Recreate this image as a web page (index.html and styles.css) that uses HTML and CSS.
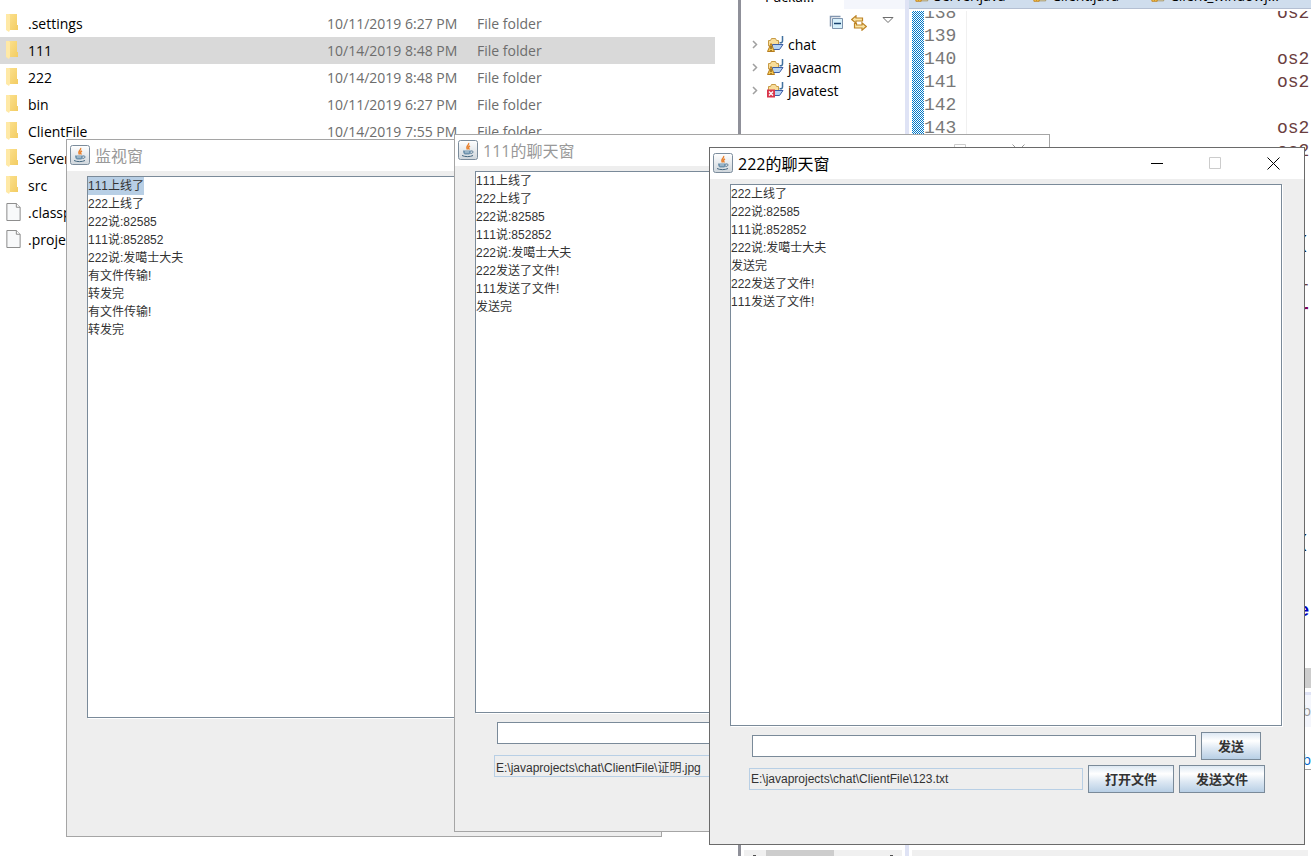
FILE: index.html
```
<!DOCTYPE html>
<html lang="zh-CN">
<head>
    <meta charset="UTF-8">
    <meta name="viewport" content="width=device-width, initial-scale=1.0">
    <title>聊天窗</title>
    <link rel="stylesheet" href="styles.css">
</head>
<body>
    <!-- shared icons -->
    <svg class="sprite" aria-hidden="true">
        <defs>
            <linearGradient id="folder-front" x1="0" y1="0" x2="1" y2="1">
                <stop offset="0" stop-color="#fbe08c"/>
                <stop offset="1" stop-color="#f3cc62"/>
            </linearGradient>
            <linearGradient id="cup-back" x1="0" y1="0" x2="0" y2="1">
                <stop offset="0" stop-color="#ffffff"/>
                <stop offset="1" stop-color="#cfd6dc"/>
            </linearGradient>
            <symbol id="folder" viewBox="0 0 12 18">
                <path d="M3 0h8v11h1v5H3z" fill="url(#folder-front)"/>
                <path d="M0 0h3l1 1v15l-1 2-3-2z" fill="#ffe9a6"/>
            </symbol>
            <symbol id="file" viewBox="0 0 15 19">
                <path d="M.5.5h10l4 4v14H.5z" fill="#f8f9fa" stroke="#858585"/>
                <path d="M10.500.500v4h4" fill="#fff" stroke="#858585"/>
            </symbol>
            <symbol id="java" viewBox="0 0 20 20">
                <rect x=".5" y=".5" width="19" height="19" rx="2" fill="url(#cup-back)" stroke="#7b8c9c"/>
                <path d="M10.500 3c1.500 2-3.500 3-1 6.500M12 6c-2 1-2 2-.5 3.500" fill="none" stroke="#e9812d" stroke-width="1.400"/>
                <path d="M5 10.500h8c0 2-.5 3.500-2 4H7c-1.500-.5-2-2-2-4z" fill="#6f93ad"/>
                <path d="M13 11c3-.5 2.500 2.500-.5 2.500" fill="none" stroke="#50748f"/>
                <path d="M4 15.500c3 1.500 8 1.500 11 0" fill="none" stroke="#45677f"/>
                <path d="M7 12h4" stroke="#c4d6e2"/>
            </symbol>
            <symbol id="project" viewBox="0 0 17 17">
                <path d="M1.500 10V4.500h2l1-2h4l1 2h2V10z" fill="#f8dd9a" stroke="#c79a45"/>
                <path d="M15.500 0v5c0 1.500-1 2-3 1.500" fill="none" stroke="#41719f" stroke-width="1.500"/>
                <path d="M5.500 8.500h10.500l-3.500 5H5.500z" fill="#b5d3f4" stroke="#3d5ea5"/>
            </symbol>
            <symbol id="warning" viewBox="0 0 8 9">
                <path d="M4 .5 7.500 8.500h-7z" fill="#f5c752" stroke="#b47b1d"/>
                <path d="M4 3v3M4 7v1" stroke="#553400"/>
            </symbol>
            <symbol id="error" viewBox="0 0 8 8">
                <path d="M0 0h8v8H0z" fill="#d9364c"/>
                <path d="M2 2l4 4M6 2L2 6" stroke="#fff" stroke-width="1.400"/>
            </symbol>
            <symbol id="java-file" viewBox="0 0 16 16">
                <path d="M6.500.5h8v13h-8z" fill="#fffbe8" stroke="#9a8852"/>
                <path d="M1 7h6v7H1z" fill="#f5c752" stroke="#c07d12"/>
                <path d="M4 9v4" stroke="#774600"/>
            </symbol>
        </defs>
    </svg>

    <div class="desktop">
        <section class="explorer">
            <table class="files">
                <tbody>
                    <tr><td class="name"><svg class="folder"><use href="#folder"/></svg>.settings</td><td class="date">10/11/2019 6:27 PM</td><td>File folder</td></tr>
                    <tr class="active"><td class="name"><svg class="folder"><use href="#folder"/></svg>111</td><td class="date">10/14/2019 8:48 PM</td><td>File folder</td></tr>
                    <tr><td class="name"><svg class="folder"><use href="#folder"/></svg>222</td><td class="date">10/14/2019 8:48 PM</td><td>File folder</td></tr>
                    <tr><td class="name"><svg class="folder"><use href="#folder"/></svg>bin</td><td class="date">10/11/2019 6:27 PM</td><td>File folder</td></tr>
                    <tr><td class="name"><svg class="folder"><use href="#folder"/></svg>ClientFile</td><td class="date">10/14/2019 7:55 PM</td><td>File folder</td></tr>
                    <tr><td class="name"><svg class="folder"><use href="#folder"/></svg>Server</td><td></td><td></td></tr>
                    <tr><td class="name"><svg class="folder"><use href="#folder"/></svg>src</td><td></td><td></td></tr>
                    <tr><td class="name"><svg class="file"><use href="#file"/></svg>.classp</td><td></td><td></td></tr>
                    <tr><td class="name"><svg class="file"><use href="#file"/></svg>.projec</td><td></td><td></td></tr>
                </tbody>
            </table>
        </section>

        <section class="packages">
            <div class="view-tabs"><span class="view-tab">Packa...</span></div>
            <div class="toolbar">
                <button class="tool" aria-label="Collapse All">
                    <svg width="15" height="15" viewBox="0 0 15 15"><path d="M1.500 11.500v-10h10" fill="none" stroke="#8296b0" stroke-width="1.500"/><path d="M3.500 3.500h10v10h-10z" fill="#d7f0fb" stroke="#7d93ad"/><path d="M5 8.500h7" stroke="#17426f" stroke-width="1.500"/></svg>
                </button>
                <button class="tool" aria-label="Link with Editor">
                    <svg width="16" height="16" viewBox="0 0 16 16"><path d="M.7 4.500 5 .8v2.200h6.500v3H5v2.200zM15.300 11.500 11 7.800V10H5.500V8.500h-2V13H11v2.200z" fill="#fbe5a5" stroke="#bd8426" stroke-width="1.200"/></svg>
                </button>
                <button class="tool menu" aria-label="View Menu">
                    <svg width="12" height="7" viewBox="0 0 12 7"><path d="M1 .5h10l-5 5z" fill="#fff" stroke="#6d6d6d"/></svg>
                </button>
            </div>
            <ul class="tree">
                <li><svg class="arrow" viewBox="0 0 6 9"><path d="M1 1l3.500 3.500L1 8" fill="none" stroke="#a0a0a0" stroke-width="1.500"/></svg><span class="icon"><svg><use href="#project"/></svg><svg class="badge"><use href="#warning"/></svg></span>chat</li>
                <li><svg class="arrow" viewBox="0 0 6 9"><path d="M1 1l3.500 3.500L1 8" fill="none" stroke="#a0a0a0" stroke-width="1.500"/></svg><span class="icon"><svg><use href="#project"/></svg><svg class="badge"><use href="#warning"/></svg></span>javaacm</li>
                <li><svg class="arrow" viewBox="0 0 6 9"><path d="M1 1l3.500 3.500L1 8" fill="none" stroke="#a0a0a0" stroke-width="1.500"/></svg><span class="icon"><svg><use href="#project"/></svg><svg class="badge"><use href="#error"/></svg></span>javatest</li>
            </ul>
            <div class="scroll"><span class="tick"></span><span class="thumb"></span><span class="tick"></span></div>
        </section>

        <section class="editor">
            <div class="editor-tabs">
                <span class="editor-tab"><svg><use href="#java-file"/></svg>Server.java</span>
                <span class="editor-tab"><svg><use href="#java-file"/></svg>Client.java</span>
                <span class="editor-tab"><svg><use href="#java-file"/></svg>Client_windowj...</span>
            </div>
            <div class="source">
                <div class="ruler"></div>
<pre class="lines">138
139
140
141
142
143</pre>
<pre class="code"><span class="var">os2</span>

<span class="var">os2</span>
<span class="var">os2</span>

<span class="var">os2</span>
<span class="var">os2</span>



  (

  <span class="var">r</span>
  <span class="key">r</span>









  (


  <span class="field">e</span>
</pre>
            </div>
            <div class="source-scroll"></div>
            <div class="console">
                <div class="console-tab">b</div>
                <div class="console-path">\<a href="#">b</a></div>
            </div>
            <div class="scroll"></div>
        </section>

        <section class="window monitor">
            <header class="titlebar"><svg class="java"><use href="#java"/></svg><h1>监视窗</h1></header>
            <div class="pane">
                <textarea class="log" id="monitor-log" aria-label="监视窗" readonly>111上线了
222上线了
222说:82585
111说:852852
222说:发噶士大夫
有文件传输!
转发完
有文件传输!
转发完</textarea>
            </div>
        </section>

        <section class="window chat-111">
            <header class="titlebar">
                <svg class="java"><use href="#java"/></svg><h1>111的聊天窗</h1>
                <button class="control" aria-label="最小化"><svg viewBox="0 0 13 13"><path d="M0 6.500h12"/></svg></button>
                <button class="control" aria-label="最大化" disabled><svg viewBox="0 0 13 13"><path d="M.5.5h11v11H.5z"/></svg></button>
                <button class="control" aria-label="关闭"><svg viewBox="0 0 13 13"><path d="M.5.5l12 12M12.500.500l-12 12"/></svg></button>
            </header>
            <div class="pane">
                <textarea class="log" aria-label="111的聊天记录" readonly>111上线了
222上线了
222说:82585
111说:852852
222说:发噶士大夫
222发送了文件!
111发送了文件!
发送完</textarea>
                <form class="row message">
                    <input type="text" aria-label="消息">
                </form>
                <form class="row upload">
                    <input type="text" class="path" aria-label="文件" value="E:\javaprojects\chat\ClientFile\证明.jpg" readonly>
                </form>
            </div>
        </section>

        <section class="window chat-222">
            <header class="titlebar">
                <svg class="java"><use href="#java"/></svg><h1>222的聊天窗</h1>
                <button class="control" aria-label="最小化"><svg viewBox="0 0 13 13"><path d="M0 6.500h12"/></svg></button>
                <button class="control" aria-label="最大化" disabled><svg viewBox="0 0 13 13"><path d="M.5.5h11v11H.5z"/></svg></button>
                <button class="control" aria-label="关闭"><svg viewBox="0 0 13 13"><path d="M.5.5l12 12M12.500.500l-12 12"/></svg></button>
            </header>
            <div class="pane">
                <textarea class="log" aria-label="222的聊天记录" readonly>222上线了
222说:82585
111说:852852
222说:发噶士大夫
发送完
222发送了文件!
111发送了文件!</textarea>
                <form class="row message">
                    <input type="text" aria-label="消息">
                    <button type="button" class="btn">发送</button>
                </form>
                <form class="row upload">
                    <input type="text" class="path" aria-label="文件" value="E:\javaprojects\chat\ClientFile\123.txt" readonly>
                    <button type="button" class="btn">打开文件</button>
                    <button type="button" class="btn">发送文件</button>
                </form>
            </div>
        </section>
    </div>

    <script>
        // the first line of the monitor log is selected
        const log = document.getElementById("monitor-log");
        log.focus();
        log.setSelectionRange(0, log.value.indexOf("\n"));
    </script>
</body>
</html>
```

FILE: styles.css
```
* {
    box-sizing: border-box;
}

body {
    margin: 0;
    background-color: #fff;
    font-family: "Open Sans", "Noto Sans CJK SC", sans-serif;
    font-size: 14px;
    font-kerning: none;
    color: #000;
}

.sprite {
    position: absolute;
    width: 0;
    height: 0;
}

.desktop {
    display: flex;
    position: relative;
    height: 100vh;
    overflow: hidden;
}

/* file explorer */
.explorer {
    flex: 0 0 741px;
    border-right: 3px solid #8f9099;
    padding-top: 10px;
}

.files {
    width: 715px;
    border-collapse: collapse;
    table-layout: fixed;
}

.files td {
    height: 27px;
    padding: 0;
    color: #6d6d6d;
    white-space: nowrap;
}

.files .name {
    width: 327px;
    padding-left: 6px;
    color: #000;
}

.files .date {
    width: 150px;
}

.files .active {
    background-color: #d9d9d9;
}

.files svg {
    vertical-align: -3px;
    height: 18px;
}

.files .folder {
    width: 12px;
    margin-right: 10px;
}

.files .file {
    width: 15px;
    margin-right: 7px;
}

/* package explorer */
.packages {
    display: flex;
    flex-direction: column;
    flex: 0 0 168px;
    border-right: 4px solid #dfe3f5;
}

.view-tabs {
    display: flex;
    height: 9px;
    overflow: hidden;
    align-items: flex-end;
    background-color: #f4f6fc;
}

.view-tab {
    width: 103px;
    padding-left: 24px;
    line-height: 24px;
    background-color: #fff;
}

.toolbar {
    display: flex;
    justify-content: flex-end;
    gap: 7px;
    padding: 6px 11px 0 0;
    height: 24px;
    align-items: flex-start;
}

.tool {
    padding: 0;
    border: none;
    background: none;
    line-height: 0;
}

.tool.menu {
    margin: 2px 0 0 8px;
}

.tree {
    flex: 1;
    margin: 0;
    padding: 0 0 0 11px;
    list-style: none;
}

.tree li {
    display: flex;
    align-items: center;
    height: 23px;
}

.tree .arrow {
    width: 6px;
    height: 9px;
    margin-right: 9px;
}

.tree .icon {
    position: relative;
    width: 17px;
    height: 17px;
    margin-right: 4px;
}

.tree .icon svg {
    width: 17px;
    height: 17px;
}

.tree .icon .badge {
    position: absolute;
    left: 0;
    bottom: 1px;
    width: 8px;
    height: 9px;
}

.scroll {
    display: flex;
    justify-content: space-between;
    height: 6px;
    margin: 0 3px;
    background-color: #f0f0f0;
}

.thumb {
    width: 68px;
    margin-right: 47px;
    background-color: #cdcdcd;
}

.tick {
    width: 3px;
    height: 1px;
    margin: 5px 9px 0;
    background-color: #505050;
}

/* java editor */
.editor {
    display: flex;
    flex-direction: column;
    flex: 1;
    min-width: 0;
}

.editor-tabs {
    display: flex;
    align-items: flex-end;
    height: 9px;
    overflow: hidden;
    padding-left: 5px;
    background-color: #cfdded;
    border-bottom: 1px solid #b4bfd2;
}

.editor-tab {
    display: flex;
    align-items: center;
    flex: 0 0 118px;
    white-space: nowrap;
    line-height: 24px;
}

.editor-tab svg {
    width: 16px;
    height: 14px;
    margin-right: 4px;
}

.source {
    display: flex;
    flex: 1;
    min-height: 0;
    overflow: hidden;
    padding: 0 0 0 3px;
    margin-top: 2px;
}

.source pre {
    margin: -9px 0 0;
    font: 18px/23px "Liberation Mono", monospace;
}

.ruler {
    flex: 0 0 12px;
    background: repeating-conic-gradient(#0078c8 0% 25%, #fff 0% 50%) 0 0 / 2px 2px;
}

.source .lines {
    width: 43px;
    color: #787878;
    border-right: 1px solid #f0f0f0;
}

.source .code {
    padding-left: 310px;
}

.var {
    color: #6a3e3e;
}

.key {
    color: #7f0055;
    font-weight: bold;
}

.field {
    color: #0000c0;
    font-weight: bold;
}

.source-scroll {
    height: 20px;
    margin: 0 0 4px 3px;
    background-color: #cdcdcd;
}

.console {
    height: 158px;
    border-top: 3px solid #dfe3f5;
    text-align: right;
}

.console-tab {
    line-height: 32px;
    background-color: #f4f6fc;
    color: #999;
}

.console-path {
    margin-top: 24px;
    line-height: 18px;
    border-bottom: 1px solid #a0a0a0;
}

.console-path a {
    color: #0066cc;
    text-decoration: none;
}

/* swing windows */
.window {
    position: absolute;
    display: flex;
    flex-direction: column;
    width: 596px;
    height: 698px;
    border: 1px solid #a5a5a5;
    background-color: #eee;
    color: #999;
}

.monitor {
    left: 66px;
    top: 139px;
}

.chat-111 {
    left: 454px;
    top: 134px;
}

.chat-222 {
    left: 709px;
    top: 147px;
    border-color: #6a6a6a;
    color: #000;
}

.titlebar {
    display: flex;
    align-items: center;
    height: 31px;
    padding: 0 2px 2px 3px;
    background-color: #fff;
}

.titlebar h1 {
    flex: 1;
    margin: 0;
    font-size: 16px;
    font-weight: normal;
}

.java {
    width: 20px;
    height: 20px;
    margin-right: 5px;
}

.control {
    width: 58px;
    height: 29px;
    padding: 1px 0 0;
    border: none;
    background: none;
    color: inherit;
    line-height: 0;
}

.control svg {
    width: 13px;
    height: 13px;
    fill: none;
    stroke: currentColor;
}

.control:disabled {
    color: #ccc;
}

.pane {
    display: flex;
    flex-direction: column;
    flex: 1;
    gap: 5px;
    padding: 5px 0 51px;
}

.log {
    flex: 0 0 542px;
    margin: 0 22px 1px 20px;
    padding: 0;
    border: 1px solid #7a8a99;
    box-shadow: 1px 1px #fff;
    background-color: #fff;
    color: #333;
    font: 12px/18px "Liberation Sans", "Noto Sans CJK SC", sans-serif;
    font-kerning: none;
    resize: none;
    outline: none;
}

.log::selection {
    background-color: #b8cfe5;
    color: #333;
}

.row {
    display: flex;
    align-items: center;
    gap: 5px;
    height: 28px;
    margin: 0;
}

.message {
    padding: 0 43px 0 42px;
}

.upload {
    padding: 0 39px;
}

.row input {
    flex: 1;
    min-width: 0;
    height: 22px;
    padding: 0 1px;
    border: 1px solid #7a8a99;
    background-color: #fff;
    color: #333;
    font: 12px "Liberation Sans", "Noto Sans CJK SC", sans-serif;
    font-kerning: none;
}

.row .path {
    border-color: #b8cfe5;
    background-color: #eee;
}

.btn {
    height: 28px;
    padding: 0 16px 2px;
    border: 1px solid #7a8a99;
    background: linear-gradient(#dde8f3, #fff 30%, #dde8f3 60%, #b8cfe5);
    color: #333;
    font: bold 13px "Liberation Sans", "Noto Sans CJK SC", sans-serif;
}
```
